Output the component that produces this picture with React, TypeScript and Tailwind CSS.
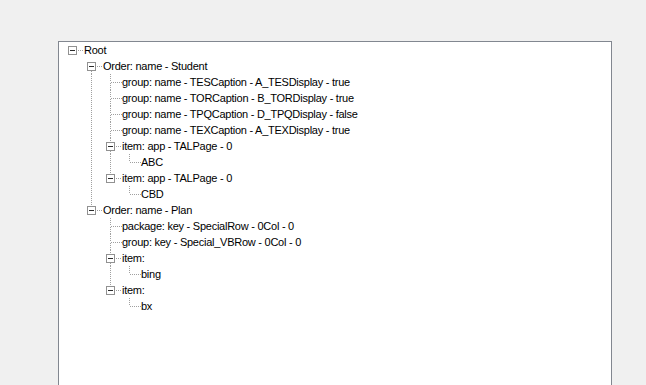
import React from 'react';

type Node = { label: string; children?: Node[] };

const TREE: Node = {
  label: 'Root',
  children: [
    {
      label: 'Order: name - Student',
      children: [
        { label: 'group: name - TESCaption - A_TESDisplay - true' },
        { label: 'group: name - TORCaption - B_TORDisplay - true' },
        { label: 'group: name - TPQCaption - D_TPQDisplay - false' },
        { label: 'group: name - TEXCaption - A_TEXDisplay - true' },
        { label: 'item: app - TALPage - 0', children: [{ label: 'ABC' }] },
        { label: 'item: app - TALPage - 0', children: [{ label: 'CBD' }] },
      ],
    },
    {
      label: 'Order: name - Plan',
      children: [
        { label: 'package: key - SpecialRow - 0Col - 0' },
        { label: 'group: key - Special_VBRow - 0Col - 0' },
        { label: 'item:', children: [{ label: 'bing' }] },
        { label: 'item:', children: [{ label: 'bx' }] },
      ],
    },
  ],
};

type Row = {
  label: string;
  guides: boolean[];
  hasNext: boolean;
  hasChildren: boolean;
  lineAbove: boolean;
};

const flatten = (node: Node, guides: boolean[], hasNext: boolean, lineAbove: boolean, out: Row[]) => {
  const kids = node.children ?? [];
  out.push({ label: node.label, guides, hasNext, hasChildren: kids.length > 0, lineAbove });
  kids.forEach((k, i) =>
    flatten(k, [...guides, hasNext], i < kids.length - 1, guides.length > 0 || i > 0, out)
  );
};

const DOT = '#a0a0a0';

const VLine = ({ y1, y2 }: { y1: number; y2: number }) => (
  <line x1={10.5} x2={10.5} y1={y1} y2={y2} stroke={DOT} strokeDasharray="1 1" />
);

const Guide = ({ on }: { on: boolean }) => (
  <svg width={19} height={16} className="shrink-0" shapeRendering="crispEdges">
    {on && <VLine y1={0} y2={16} />}
  </svg>
);

const Own = ({ row }: { row: Row }) => (
  <svg width={22} height={16} className="shrink-0" shapeRendering="crispEdges">
    {row.lineAbove && <VLine y1={0} y2={row.hasChildren ? 4 : 8} />}
    {row.hasNext && <VLine y1={row.hasChildren ? 13 : 9} y2={16} />}
    <line
      x1={row.hasChildren ? 16 : 11}
      x2={22}
      y1={8.5}
      y2={8.5}
      stroke={DOT}
      strokeDasharray="1 1"
    />
    {row.hasChildren && (
      <>
        <rect x={6.5} y={4.5} width={8} height={8} fill="#fff" stroke="#919191" />
        <rect x={8} y={8} width={5} height={1} fill="#2b2b2b" />
      </>
    )}
  </svg>
);

export default function App() {
  const rows: Row[] = [];
  flatten(TREE, [], false, false, rows);

  return (
    <div className="w-[646px] h-[385px] overflow-hidden bg-[#f0f0f0] pt-[41px] pl-[58px]">
      <div className="w-[554px] h-[360px] border border-[#828790] bg-white pl-[3px] font-['Liberation_Sans',Arial,sans-serif] text-[11px] leading-4 tracking-[-0.25px] text-black">
        {rows.map((row, i) => (
          <div key={i} className="flex h-4 items-center">
            {row.guides.map((g, j) => (
              <Guide key={j} on={g} />
            ))}
            <Own row={row} />
            <span className="whitespace-nowrap">{row.label}</span>
          </div>
        ))}
      </div>
    </div>
  );
}
